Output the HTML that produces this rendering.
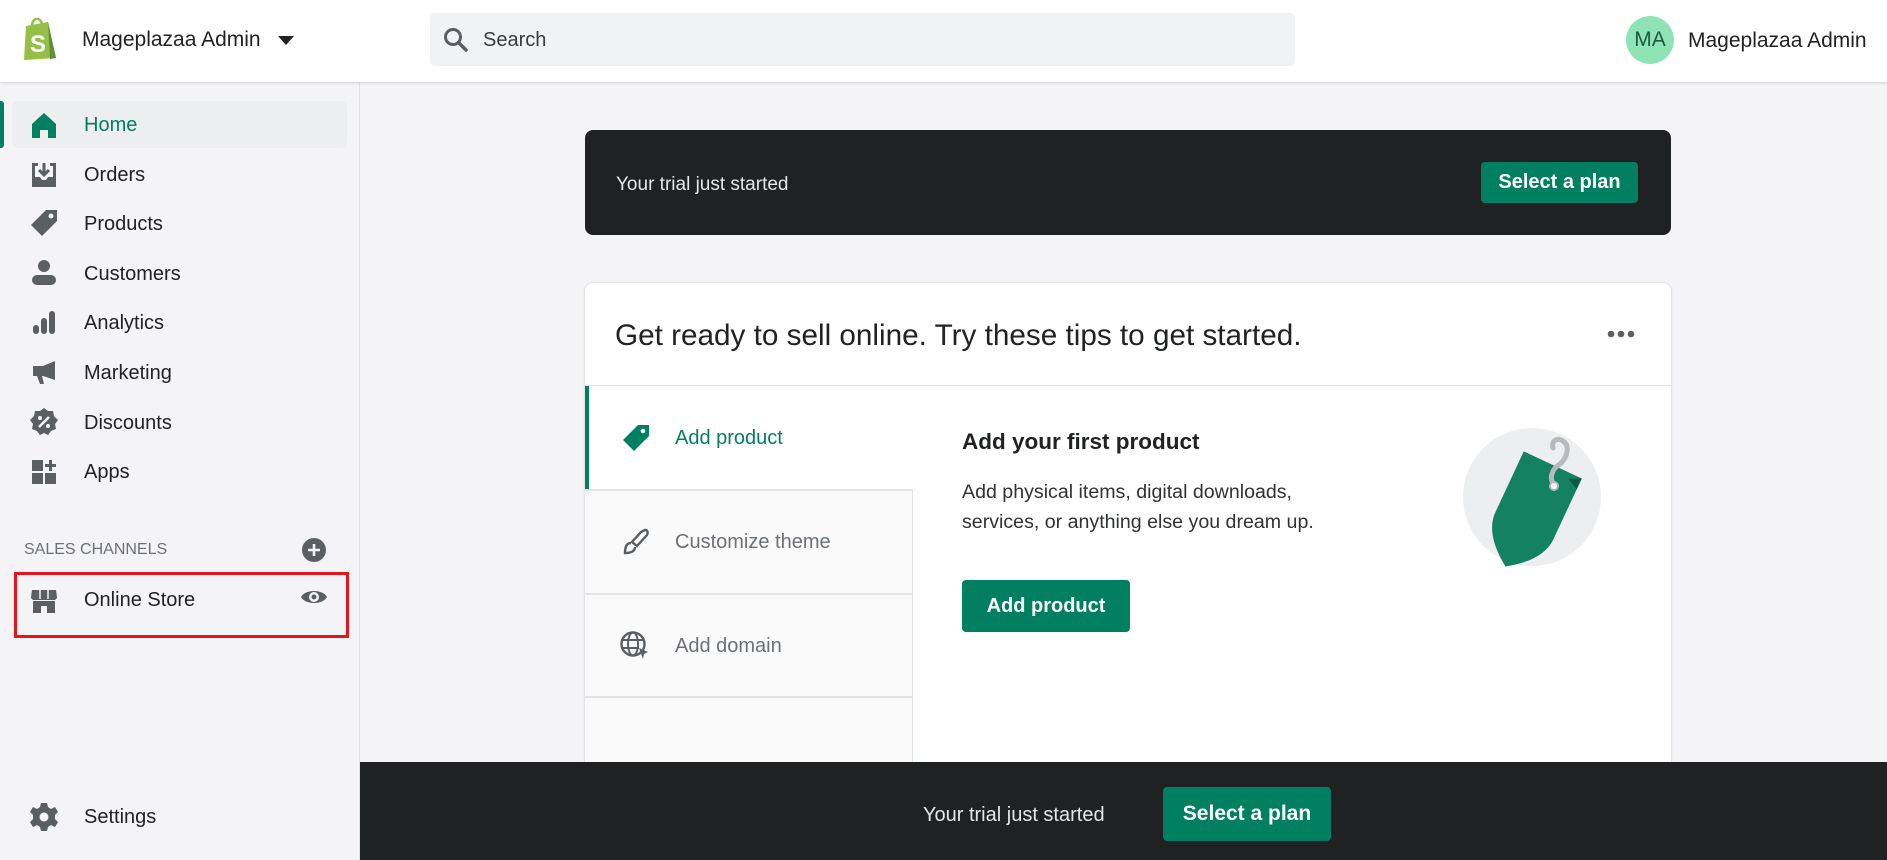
<!DOCTYPE html>
<html><head><meta charset="utf-8"><style>
*{box-sizing:border-box;margin:0;padding:0}
body{width:1887px;height:860px;overflow:hidden;background:#f4f4f6;font-family:"Liberation Sans",sans-serif;color:#202223;position:relative}
.top{position:absolute;left:0;top:0;width:1887px;height:82px;background:#fff;box-shadow:0 1px 3px rgba(0,0,0,.15);z-index:2}
.abs{position:absolute}
.side{position:absolute;left:0;top:82px;width:360px;height:778px;background:#f4f4f6;border-right:1px solid #e1e3e5}
.nav{position:absolute;left:84px;font-size:20px;color:#202223}
.ic{position:absolute;left:29px;width:30px;height:30px}
</style></head><body>
<div class="top">
 <svg class="abs" style="left:20px;top:16px" width="40" height="46" viewBox="0 0 40 46"><path d="M6 10 L28 6 L36 42 L4 44 Z" fill="#95bf47"/><path d="M28 6 L36 42 L30 43 Z" fill="#5e8e3e"/><path d="M12 10 C12 2 20 0 22 8" stroke="#95bf47" stroke-width="2.5" fill="none"/><text x="10" y="36" font-size="24" font-weight="bold" fill="#fff" font-family="Liberation Sans">S</text></svg>
 <div class="abs" style="left:82px;top:28px;font-size:21px">Mageplazaa Admin</div>
 <svg class="abs" style="left:278px;top:36px" width="16" height="9"><path d="M0 0H16L8 9Z" fill="#202223"/></svg>
 <div class="abs" style="left:430px;top:13px;width:865px;height:53px;background:#f1f2f3;border-radius:5px"></div>
 <svg class="abs" style="left:443px;top:27px" width="26" height="26" viewBox="0 0 26 26"><circle cx="10" cy="10" r="7.5" stroke="#5c5f62" stroke-width="3" fill="none"/><path d="M15.5 15.5L23 23" stroke="#5c5f62" stroke-width="3.5" stroke-linecap="round"/></svg>
 <div class="abs" style="left:483px;top:29px;font-size:20px;color:#3a3b3d">Search</div>
 <div class="abs" style="left:1626px;top:16px;width:48px;height:48px;border-radius:50%;background:#8ee4b4;color:#1f5a3c;font-size:21px;text-align:center;line-height:48px">MA</div>
 <div class="abs" style="left:1688px;top:29px;font-size:21px">Mageplazaa Admin</div>
</div>
<div class="side">
 <div class="abs" style="left:0;top:19px;width:4px;height:47px;background:#008060;border-radius:0 3px 3px 0"></div>
 <div class="abs" style="left:12px;top:19px;width:335px;height:47px;background:#edeeef;border-radius:6px"></div>
</div>
<svg class="ic" style="top:110px" viewBox="0 0 30 30"><path d="M3 14L15 3L27 14V28H19V20H11V28H3Z" fill="#008060"/></svg>
<div class="nav" style="top:114px;color:#007f5f">Home</div>
<svg class="ic" style="top:160px" viewBox="0 0 30 30"><path d="M3 3H9V6H6V17H11L13 20H17L19 17H24V6H21V3H27V27H3Z" fill="#5c5f62"/><path d="M15 3V14M10 10L15 15L20 10" stroke="#5c5f62" stroke-width="3" fill="none"/></svg>
<div class="nav" style="top:164px">Orders</div>
<svg class="ic" style="top:208px" viewBox="0 0 30 30"><path d="M17 2H28V13L13 28L2 17Z" fill="#5c5f62"/><circle cx="22" cy="8" r="2.5" fill="#f4f4f6"/></svg>
<div class="nav" style="top:213px">Products</div>
<svg class="ic" style="top:258px" viewBox="0 0 30 30"><circle cx="15" cy="8" r="6" fill="#5c5f62"/><rect x="3" y="17" width="24" height="10" rx="5" fill="#5c5f62"/></svg>
<div class="nav" style="top:263px">Customers</div>
<svg class="ic" style="top:308px" viewBox="0 0 30 30"><rect x="4" y="17" width="6" height="9" rx="3" fill="#5c5f62"/><rect x="12" y="10" width="6" height="16" rx="3" fill="#5c5f62"/><rect x="20" y="3" width="6" height="23" rx="3" fill="#5c5f62"/></svg>
<div class="nav" style="top:312px">Analytics</div>
<svg class="ic" style="top:358px" viewBox="0 0 30 30"><path d="M26 3V22L14 18H4V8H14Z" fill="#5c5f62"/><path d="M8 18L11 26H15L13 18Z" fill="#5c5f62"/></svg>
<div class="nav" style="top:362px">Marketing</div>
<svg class="ic" style="top:407px" viewBox="0 0 30 30"><path d="M15 1L19 4L24 4L25 9L29 13L26 17L27 22L22 24L19 28L15 26L11 28L8 24L3 22L4 17L1 13L5 9L6 4L11 4Z" fill="#5c5f62"/><path d="M10 20L20 10" stroke="#f4f4f6" stroke-width="2.5"/><circle cx="11" cy="11" r="2" fill="#f4f4f6"/><circle cx="19" cy="19" r="2" fill="#f4f4f6"/></svg>
<div class="nav" style="top:412px">Discounts</div>
<svg class="ic" style="top:457px" viewBox="0 0 30 30"><rect x="3" y="3" width="11" height="11" fill="#5c5f62"/><rect x="3" y="16" width="11" height="11" fill="#5c5f62"/><rect x="16" y="16" width="11" height="11" fill="#5c5f62"/><path d="M21.5 3V14M16 8.5H27" stroke="#5c5f62" stroke-width="3"/></svg>
<div class="nav" style="top:461px">Apps</div>
<div class="abs" style="left:24px;top:541px;font-size:16px;color:#6d7175">SALES CHANNELS</div>
<svg class="abs" style="left:301px;top:537px" width="26" height="26" viewBox="0 0 26 26"><circle cx="13" cy="13" r="12" fill="#5c5f62"/><path d="M13 7V19M7 13H19" stroke="#f4f4f6" stroke-width="2.6"/></svg>
<div class="abs" style="left:14px;top:572px;width:335px;height:66px;border:3px solid #e8141c"></div>
<svg class="ic" style="top:586px" viewBox="0 0 30 30"><path d="M3 4H27L28 11C28 13 26 14 25 14H5C4 14 2 13 2 11Z" fill="#5c5f62"/><path d="M4 15H26V27H18V20H12V27H4Z" fill="#5c5f62"/><path d="M11 4V13M19 4V13" stroke="#f4f4f6" stroke-width="1.5"/></svg>
<div class="nav" style="top:589px">Online Store</div>
<svg class="abs" style="left:300px;top:586px" width="28" height="22" viewBox="0 0 28 22"><path d="M1 11C5 3 23 3 27 11C23 19 5 19 1 11Z" fill="#5c5f62"/><circle cx="14" cy="11" r="5" fill="#f4f4f6"/><circle cx="14" cy="11" r="2.5" fill="#5c5f62"/></svg>
<svg class="ic" style="top:802px" viewBox="0 0 30 30"><path d="M12 1H18L19 5L22 7L26 5L29 10L26 13V17L29 20L26 25L22 23L19 25L18 29H12L11 25L8 23L4 25L1 20L4 17V13L1 10L4 5L8 7L11 5Z" fill="#5c5f62"/><circle cx="15" cy="15" r="4.5" fill="#f4f4f6"/></svg>
<div class="nav" style="top:806px">Settings</div>

<div class="abs" style="left:585px;top:130px;width:1086px;height:105px;background:#202123;border-radius:8px"></div>
<div class="abs" style="left:616px;top:174px;font-size:19px;color:#e3e5e7">Your trial just started</div>
<div class="abs" style="left:1481px;top:162px;width:157px;height:41px;background:#008060;border-radius:4px;color:#fff;font-size:20px;font-weight:bold;text-align:center;line-height:41px">Select a plan</div>

<div class="abs" style="left:585px;top:283px;width:1086px;height:500px;background:#fff;border-radius:8px;box-shadow:0 0 2px rgba(0,0,0,.2);overflow:hidden">
 <div class="abs" style="left:30px;top:36px;font-size:29.7px;color:#202223">Get ready to sell online. Try these tips to get started.</div>
 <svg class="abs" style="left:1022px;top:47px" width="28" height="8"><circle cx="4" cy="4" r="3.3" fill="#5c5f62"/><circle cx="14" cy="4" r="3.3" fill="#5c5f62"/><circle cx="24" cy="4" r="3.3" fill="#5c5f62"/></svg>
 <div class="abs" style="left:0;top:102px;width:1086px;height:1px;background:#e1e3e5"></div>
 <div class="abs" style="left:0;top:103px;width:328px;height:400px;background:#fafafa;border-right:1px solid #e1e3e5"></div>
 <div class="abs" style="left:0;top:103px;width:328px;height:103px;background:#fff;border-left:4px solid #008060"></div>
 <div class="abs" style="left:0;top:206px;width:328px;height:2px;background:#e1e3e5"></div>
 <div class="abs" style="left:0;top:310px;width:328px;height:2px;background:#e1e3e5"></div>
 <div class="abs" style="left:0;top:413px;width:328px;height:2px;background:#e1e3e5"></div>
 <svg class="abs" style="left:36px;top:140px" width="30" height="30" viewBox="0 0 30 30"><path d="M17 2H28V13L13 28L2 17Z" fill="#008060"/><circle cx="22" cy="8" r="2.3" fill="#fff"/></svg>
 <div class="abs" style="left:90px;top:144px;font-size:20px;color:#007f5f">Add product</div>
 <svg class="abs" style="left:36px;top:244px" width="30" height="30" viewBox="0 0 30 30"><path d="M24 3C27 3 27 6 26 8L16 19L11 15L20 5Z" stroke="#5c5f62" stroke-width="2.4" fill="none"/><path d="M10 16C5 16 4 21 4 26C9 26 14 25 14 20" stroke="#5c5f62" stroke-width="2.4" fill="none"/></svg>
 <div class="abs" style="left:90px;top:248px;font-size:20px;color:#6d7175">Customize theme</div>
 <svg class="abs" style="left:34px;top:347px" width="32" height="32" viewBox="0 0 32 32"><circle cx="14" cy="14" r="11.5" stroke="#5c5f62" stroke-width="2.4" fill="none"/><ellipse cx="14" cy="14" rx="5" ry="11.5" stroke="#5c5f62" stroke-width="2" fill="none"/><path d="M3 10H25M3 18H20" stroke="#5c5f62" stroke-width="2"/><path d="M20 18L29 22L25 24L24 29Z" fill="#5c5f62"/></svg>
 <div class="abs" style="left:90px;top:352px;font-size:20px;color:#6d7175">Add domain</div>
 <div class="abs" style="left:377px;top:146px;font-size:22.5px;font-weight:bold;color:#202223">Add your first product</div>
 <div class="abs" style="left:377px;top:194px;font-size:19.6px;color:#303234;line-height:30px">Add physical items, digital downloads,<br>services, or anything else you dream up.</div>
 <div class="abs" style="left:377px;top:297px;width:168px;height:52px;background:#008060;border-radius:4px;color:#fff;font-size:20px;font-weight:bold;text-align:center;line-height:52px">Add product</div>
 <svg class="abs" style="left:870px;top:140px" width="150" height="150" viewBox="0 0 150 150"><circle cx="77" cy="74" r="69" fill="#edeef0"/><g transform="rotate(25 80 80)"><path d="M48 38H112V105C112 125 95 140 80 150C65 140 48 125 48 105Z" fill="#128261"/><path d="M112 38V50L100 44Z" fill="#0b5a44"/></g><path d="M100 62C93 56 97 46 105 41C113 34 115 22 108 18C102 14 96 18 98 25" stroke="#b7b9bc" stroke-width="5" fill="none" stroke-linecap="round"/><circle cx="99" cy="63" r="4" fill="#fff" stroke="#b7b9bc" stroke-width="2"/></svg>
</div>

<div class="abs" style="left:360px;top:762px;width:1527px;height:98px;background:#202123"></div>
<div class="abs" style="left:923px;top:804px;font-size:20px;color:#e3e5e7">Your trial just started</div>
<div class="abs" style="left:1163px;top:787px;width:168px;height:54px;background:#008060;border-radius:4px;color:#fff;font-size:21px;font-weight:bold;text-align:center;line-height:54px">Select a plan</div>
</body></html>
